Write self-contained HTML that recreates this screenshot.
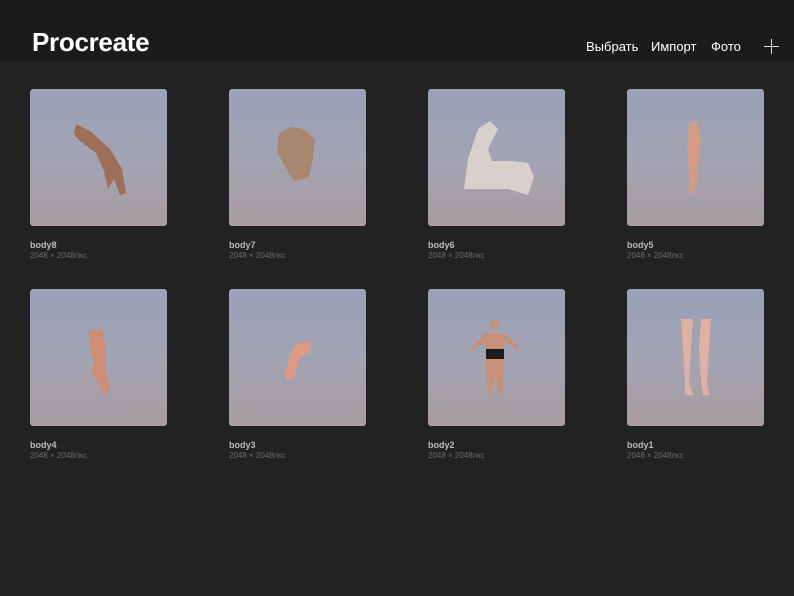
<!DOCTYPE html>
<html><head><meta charset="utf-8"><style>
*{margin:0;padding:0;box-sizing:border-box}
body{width:794px;height:596px;background:#222222;font-family:"Liberation Sans",sans-serif;position:relative;overflow:hidden}
.hdr{position:absolute;left:0;top:0;width:794px;height:62px;background:#1b1b1b}
.title{position:absolute;left:32px;top:27px;font-size:26px;font-weight:bold;color:#fff;letter-spacing:-0.3px}
.nav{position:absolute;top:39px;font-size:13px;color:#fff}
.plus{position:absolute;left:764px;top:39px;width:15px;height:15px}
.plus:before{content:"";position:absolute;left:7px;top:0;width:1px;height:15px;background:#ddd}
.plus:after{content:"";position:absolute;left:0;top:7px;width:15px;height:1px;background:#ddd}
.card{position:absolute;width:137px;height:137px;border-radius:3px;background:linear-gradient(180deg,#98a2b8 0%,#a3a3b2 55%,#aa9ca0 100%);overflow:hidden}
.card svg{position:absolute;left:0;top:0}
.nm{position:absolute;font-size:9px;font-weight:bold;color:#bbb}
.sz{position:absolute;font-size:8px;color:#6a6a6a}
</style></head><body>
<div class="hdr"></div>
<div class="title">Procreate</div>
<div class="nav" style="left:586px">Выбрать</div>
<div class="nav" style="left:651px">Импорт</div>
<div class="nav" style="left:711px">Фото</div>
<div class="plus"></div>

<div class="card" style="left:30px;top:89px"><svg width="137" height="137"><path d="M46 35 L60 42 L80 60 L92 80 L96 104 L90 106 L84 90 L78 100 L74 82 L66 64 L50 52 L44 45Z" fill="#9e6f58"/></svg></div>
<div class="card" style="left:229px;top:89px"><svg width="137" height="137"><path d="M50 45 L62 38 L75 40 L86 50 L84 70 L80 88 L65 92 L57 80 L48 62Z" fill="#a88670"/></svg></div>
<div class="card" style="left:428px;top:89px"><svg width="137" height="137"><path d="M36 100 L40 70 L50 40 L62 32 L70 40 L60 60 L64 72 L84 72 L100 74 L106 88 L100 106 L80 100 L60 100Z" fill="#d9cfcc"/></svg></div>
<div class="card" style="left:627px;top:89px"><svg width="137" height="137"><path d="M62 34 L70 32 L74 50 L72 70 L70 90 L68 104 L62 104 L62 86 L60 60Z" fill="#d49c84"/></svg></div>

<div class="card" style="left:30px;top:289px"><svg width="137" height="137"><path d="M58 42 L72 40 L76 60 L76 80 L80 100 L74 106 L68 92 L62 86 L64 72 L60 56Z" fill="#d08d76"/></svg></div>
<div class="card" style="left:229px;top:289px"><svg width="137" height="137"><path d="M66 56 L80 52 L82 60 L70 70 L66 86 L58 92 L56 84 L60 70Z" fill="#e09a84"/></svg></div>
<div class="card" style="left:428px;top:289px"><svg width="137" height="137"><circle cx="67" cy="36" r="5" fill="#c99078"/><path d="M58 44 L76 44 L92 60 L90 62 L76 52 L76 82 L74 104 L70 104 L68 88 L66 88 L64 104 L60 104 L58 82 L58 52 L44 62 L42 60Z" fill="#c99078"/><rect x="58" y="60" width="18" height="10" fill="#1c1c1c"/></svg></div>
<div class="card" style="left:627px;top:289px"><svg width="137" height="137"><path d="M54 30 L66 30 L64 60 L62 92 L66 106 L58 106 L58 90 L56 60Z" fill="#dfb0a4"/><path d="M74 30 L84 30 L82 60 L80 92 L82 106 L76 106 L74 90 L72 60Z" fill="#dfb0a4"/></svg></div>

<div class="nm" style="left:30px;top:240px">body8</div><div class="sz" style="left:30px;top:251px">2048 × 2048пкс</div>
<div class="nm" style="left:229px;top:240px">body7</div><div class="sz" style="left:229px;top:251px">2048 × 2048пкс</div>
<div class="nm" style="left:428px;top:240px">body6</div><div class="sz" style="left:428px;top:251px">2048 × 2048пкс</div>
<div class="nm" style="left:627px;top:240px">body5</div><div class="sz" style="left:627px;top:251px">2048 × 2048пкс</div>
<div class="nm" style="left:30px;top:440px">body4</div><div class="sz" style="left:30px;top:451px">2048 × 2048пкс</div>
<div class="nm" style="left:229px;top:440px">body3</div><div class="sz" style="left:229px;top:451px">2048 × 2048пкс</div>
<div class="nm" style="left:428px;top:440px">body2</div><div class="sz" style="left:428px;top:451px">2048 × 2048пкс</div>
<div class="nm" style="left:627px;top:440px">body1</div><div class="sz" style="left:627px;top:451px">2048 × 2048пкс</div>
</body></html>
